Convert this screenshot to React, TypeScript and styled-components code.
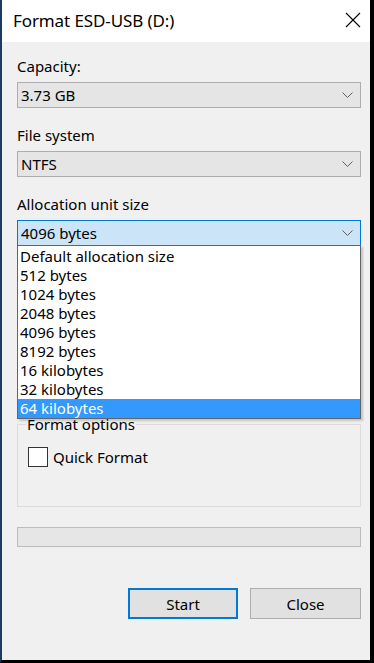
import styled, { createGlobalStyle } from "styled-components";

const GlobalStyle = createGlobalStyle`
    html, body {
        margin: 0;
        padding: 0;
        background: #000;
    }
    * {
        box-sizing: border-box;
    }
`;

const uiFont = `"Noto Sans", "Open Sans", sans-serif`;

const Window = styled.div`
    width: 374px;
    height: 663px;
    display: flex;
    flex-direction: column;
    border-left: 2px solid #1c3b63;
    border-right: 4px solid #000;
    border-bottom: 3px solid #000;
    font-family: ${uiFont};
    color: #000;
`;

const TitleBar = styled.div`
    height: 42px;
    flex: none;
    background: #fff;
    display: flex;
    align-items: center;
    justify-content: space-between;
    padding: 0 8px 2px 11px;
`;

const Title = styled.div`
    font-size: 17px;
    letter-spacing: -0.1px;
`;

const CloseX = styled.svg`
    width: 16px;
    height: 16px;
    margin-right: 1px;
`;

const Body = styled.div`
    flex: 1;
    background: #f0f0f0;
    padding: 14px 9px 0 15px;
    display: flex;
    flex-direction: column;
    font-size: 15px;
`;

const Label = styled.div<{ $gap?: number }>`
    height: 20px;
    line-height: 20px;
    margin-top: ${p => p.$gap ?? 0}px;
    margin-bottom: 6px;
`;

const Combo = styled.div<{ $focused?: boolean }>`
    position: relative;
    height: 26px;
    display: flex;
    align-items: center;
    justify-content: space-between;
    padding: 0 7px 0 3px;
    background: ${p => (p.$focused ? "#cce4f7" : "#e5e5e5")};
    border: 1px solid ${p => (p.$focused ? "#0078d7" : "#adadad")};
`;

const Chevron = styled.svg`
    width: 11px;
    height: 7px;
`;

const DropList = styled.ul`
    position: absolute;
    top: 100%;
    left: -1px;
    right: -1px;
    margin: 0;
    padding: 1px 0 0;
    list-style: none;
    background: #fff;
    border: 1px solid #646464;
    box-shadow: 2px 2px 2px rgba(0, 0, 0, 0.18);
    z-index: 2;
`;

const DropItem = styled.li<{ $selected?: boolean }>`
    height: 19px;
    line-height: 19px;
    padding-left: 2px;
    background: ${p => (p.$selected ? "#3399ff" : "transparent")};
    color: ${p => (p.$selected ? "#fff" : "#000")};
`;

const Group = styled.fieldset`
    margin: 170px 0 0;
    height: 91px;
    padding: 0;
    border: 1px solid #dcdcdc;
    min-width: 0;
`;

const Legend = styled.legend`
    padding: 0 1px;
    margin-left: 8px;
    font-size: 15px;
    line-height: 16px;
`;

const CheckRow = styled.label`
    display: flex;
    align-items: center;
    gap: 5px;
    margin: 15px 0 0 10px;
`;

const Box = styled.span`
    width: 20px;
    height: 20px;
    background: #fff;
    border: 1px solid #333;
`;

const Progress = styled.div`
    margin-top: 20px;
    height: 20px;
    background: #e6e6e6;
    border: 1px solid #bcbcbc;
`;

const ButtonRow = styled.div`
    margin-top: 41px;
    display: flex;
    justify-content: flex-end;
    gap: 12px;
`;

const Button = styled.button<{ $default?: boolean }>`
    width: ${p => (p.$default ? 110 : 111)}px;
    height: 31px;
    font-family: ${uiFont};
    font-size: 15px;
    color: #000;
    background: #e1e1e1;
    border: ${p => (p.$default ? "2px solid #0078d7" : "1px solid #adadad")};
    padding: 0;
`;

const sizes = [
    "Default allocation size",
    "512 bytes",
    "1024 bytes",
    "2048 bytes",
    "4096 bytes",
    "8192 bytes",
    "16 kilobytes",
    "32 kilobytes",
    "64 kilobytes",
];

const Arrow = () => (
    <Chevron viewBox="0 0 11 7">
        <path d="M0.5 0.5 L5.5 5.5 L10.5 0.5" fill="none" stroke="#606060" strokeWidth="1" />
    </Chevron>
);

const App = () => {
    return (
        <>
            <GlobalStyle />
            <Window>
                <TitleBar>
                    <Title>Format ESD-USB (D:)</Title>
                    <CloseX viewBox="0 0 16 16">
                        <path d="M1 1 L15 15 M15 1 L1 15" stroke="#000" strokeWidth="1.1" />
                    </CloseX>
                </TitleBar>

                <Body>
                    <Label>Capacity:</Label>
                    <Combo>
                        3.73 GB
                        <Arrow />
                    </Combo>

                    <Label $gap={17}>File system</Label>
                    <Combo>
                        NTFS
                        <Arrow />
                    </Combo>

                    <Label $gap={17}>Allocation unit size</Label>
                    <Combo $focused>
                        4096 bytes
                        <Arrow />
                        <DropList>
                            {sizes.map(s => (
                                <DropItem key={s} $selected={s === "64 kilobytes"}>{s}</DropItem>
                            ))}
                        </DropList>
                    </Combo>

                    <Group>
                        <Legend>Format options</Legend>
                        <CheckRow>
                            <Box />
                            Quick Format
                        </CheckRow>
                    </Group>

                    <Progress />

                    <ButtonRow>
                        <Button $default>Start</Button>
                        <Button>Close</Button>
                    </ButtonRow>
                </Body>
            </Window>
        </>
    );
};

export default App;
